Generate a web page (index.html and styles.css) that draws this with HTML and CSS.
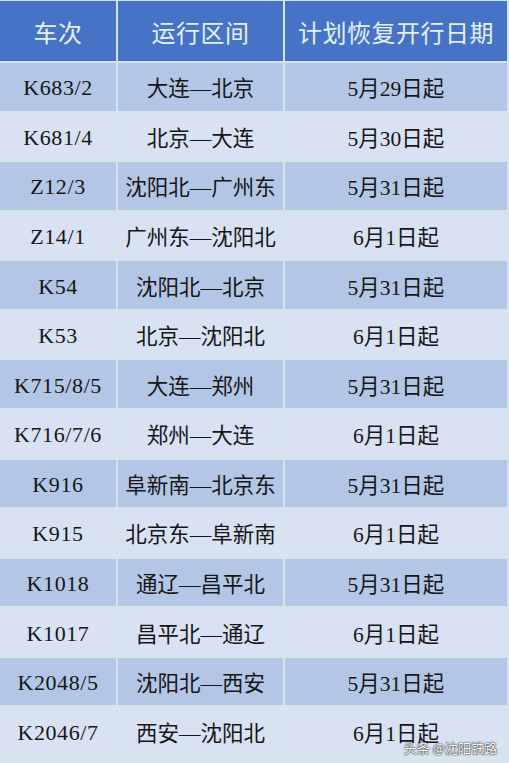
FILE: index.html
```html
<!DOCTYPE html>
<html lang="zh-CN">
<head>
<meta charset="utf-8">
<link rel="stylesheet" href="styles.css">
</head>
<body>
<div class="page">
  <div class="table">
    <div class="cell head">车次</div><div class="cell head">运行区间</div><div class="cell head">计划恢复开行日期</div>
    <div class="cell code dark">K683/2</div><div class="cell dark">大连—北京</div><div class="cell dark">5月29日起</div>
    <div class="cell code light">K681/4</div><div class="cell light">北京—大连</div><div class="cell light">5月30日起</div>
    <div class="cell code dark">Z12/3</div><div class="cell dark">沈阳北—广州东</div><div class="cell dark">5月31日起</div>
    <div class="cell code light">Z14/1</div><div class="cell light">广州东—沈阳北</div><div class="cell light">6月1日起</div>
    <div class="cell code dark">K54</div><div class="cell dark">沈阳北—北京</div><div class="cell dark">5月31日起</div>
    <div class="cell code light">K53</div><div class="cell light">北京—沈阳北</div><div class="cell light">6月1日起</div>
    <div class="cell code dark">K715/8/5</div><div class="cell dark">大连—郑州</div><div class="cell dark">5月31日起</div>
    <div class="cell code light">K716/7/6</div><div class="cell light">郑州—大连</div><div class="cell light">6月1日起</div>
    <div class="cell code dark">K916</div><div class="cell dark">阜新南—北京东</div><div class="cell dark">5月31日起</div>
    <div class="cell code light">K915</div><div class="cell light">北京东—阜新南</div><div class="cell light">6月1日起</div>
    <div class="cell code dark">K1018</div><div class="cell dark">通辽—昌平北</div><div class="cell dark">5月31日起</div>
    <div class="cell code light">K1017</div><div class="cell light">昌平北—通辽</div><div class="cell light">6月1日起</div>
    <div class="cell code dark">K2048/5</div><div class="cell dark">沈阳北—西安</div><div class="cell dark">5月31日起</div>
    <div class="cell code light">K2046/7</div><div class="cell light">西安—沈阳北</div><div class="cell light">6月1日起</div>
  </div>
  <div class="watermark">头条 @沈阳铁路</div>
</div>
</body>
</html>
```
FILE: styles.css
```css
html, body {
  margin: 0;
  padding: 0;
  background: #d9e5ec;
}
.page {
  position: relative;
  width: 509px;
  height: 763px;
  overflow: hidden;
  background: #d9e5ec;
}
.table {
  display: grid;
  grid-template-columns: 116px 165px 222px;
  grid-template-rows: 60px repeat(14, 1fr);
  column-gap: 2px;
  row-gap: 2px;
  height: 754px;
  padding-top: 1px;
  padding-right: 2px;
  background: #d4e4ea;
  font-family: "Liberation Serif", "Noto Sans CJK SC", serif;
}
.cell {
  display: flex;
  align-items: center;
  justify-content: center;
  font-size: 21.5px;
  color: #161616;
  white-space: nowrap;
}
.code {
  font-size: 22px;
  letter-spacing: 0.6px;
  padding-top: 3px;
}
.head {
  background: #4673c6;
  color: #e3f0f0;
  font-family: "Noto Sans CJK SC", sans-serif;
  font-size: 24px;
  letter-spacing: 0.5px;
  padding-top: 0;
}
.dark {
  background: #b3c6e6;
}
.light {
  background: #d9e2f3;
}
.watermark {
  position: absolute;
  right: 12px;
  bottom: 6px;
  font-family: "Noto Sans CJK SC", sans-serif;
  font-size: 13px;
  color: #ffffff;
  text-shadow: 0 0 1px #333, 0 0 1px #333, 0 0 2px #555;
}
```
